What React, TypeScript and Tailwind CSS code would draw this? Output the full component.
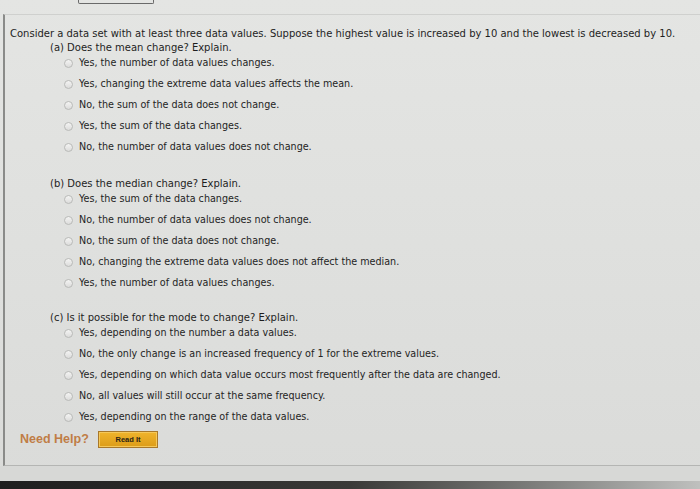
import React from 'react';

interface Part {
  label: string;
  gap: string;
  options: string[];
}

const parts: Part[] = [
  {
    label: '(a) Does the mean change? Explain.',
    gap: 'mt-0',
    options: [
      'Yes, the number of data values changes.',
      'Yes, changing the extreme data values affects the mean.',
      'No, the sum of the data does not change.',
      'Yes, the sum of the data changes.',
      'No, the number of data values does not change.',
    ],
  },
  {
    label: '(b) Does the median change? Explain.',
    gap: 'mt-[23px]',
    options: [
      'Yes, the sum of the data changes.',
      'No, the number of data values does not change.',
      'No, the sum of the data does not change.',
      'No, changing the extreme data values does not affect the median.',
      'Yes, the number of data values changes.',
    ],
  },
  {
    label: '(c) Is it possible for the mode to change? Explain.',
    gap: 'mt-[21px]',
    options: [
      'Yes, depending on the number a data values.',
      'No, the only change is an increased frequency of 1 for the extreme values.',
      'Yes, depending on which data value occurs most frequently after the data are changed.',
      'No, all values will still occur at the same frequency.',
      'Yes, depending on the range of the data values.',
    ],
  },
];

const Radio = () => (
  <span className="w-[9px] h-[9px] rounded-full border border-[#b9bab8] bg-gradient-to-b from-[#f4f4f3] to-[#dcdcdb] shrink-0" />
);

const Question: React.FC<{ part: Part }> = ({ part }) => (
  <div className={part.gap}>
    <p className="h-[14px] leading-[14px] pl-[40px] text-[#1e1e1e]">{part.label}</p>
    <div className="flex flex-col gap-[7px] mt-[1px] text-[9.6px]">
      {part.options.map((opt) => (
        <label key={opt} className="flex items-center gap-[6px] h-[14px] pl-[54px] text-[#242424]">
          <Radio />
          <span className="leading-[14px]">{opt}</span>
        </label>
      ))}
    </div>
  </div>
);

export default function App() {
  return (
    <div
      className="w-[700px] h-[489px] overflow-hidden flex flex-col bg-gradient-to-b from-[#e4e5e3] via-[#dfe0de] to-[#dadbd9] text-[10px]"
      style={{ fontFamily: '"DejaVu Sans", Verdana, sans-serif' }}
    >
      <div className="h-[14px] shrink-0">
        <div className="ml-[78px] w-[76px] h-[4px] border-x border-b border-[#6a6a6a] rounded-b-[2px]" />
      </div>

      <div className="ml-[3px] h-[452px] shrink-0 border-l-2 border-t border-b border-l-[#8a8b89] border-t-[#cfd0ce] border-b-[#b4b5b3] pl-[5px] pt-[12px]">
        <p className="h-[14px] leading-[14px] text-[#1e1e1e]">
          Consider a data set with at least three data values. Suppose the highest value is increased by 10 and the lowest is decreased by 10.
        </p>

        {parts.map((p) => (
          <Question key={p.label} part={p} />
        ))}

        <div className="flex items-center h-[17px] mt-[7px] pl-[10px]">
          <span
            className="text-[12.5px] font-bold text-[#c07d46] w-[78px]"
            style={{ fontFamily: '"Liberation Sans", Arial, sans-serif' }}
          >
            Need Help?
          </span>
          <button
            className="w-[60px] h-[17px] border border-[#a8782a] bg-gradient-to-b from-[#f0b42c] to-[#dc9c18] flex items-center justify-center shadow-[inset_0_0_0_1px_#f5c85a]"
            style={{ fontFamily: '"Liberation Sans", Arial, sans-serif' }}
          >
            <span className="text-[7.5px] font-bold text-[#2a2214]">Read It</span>
          </button>
        </div>
      </div>

      <div className="flex-1 bg-[#d7d8d6]" />
      <div className="h-[8px] shrink-0 bg-gradient-to-r from-[#1e1e1e] via-[#3a3a38] to-[#bfc0be]" />
    </div>
  );
}
